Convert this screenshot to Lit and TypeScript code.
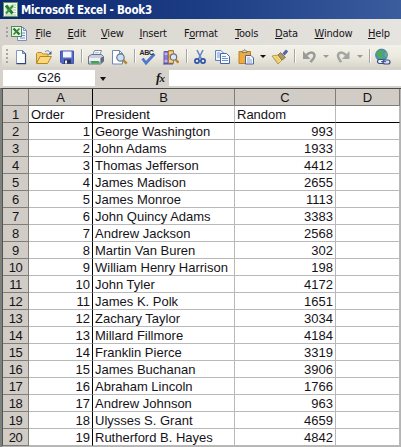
import { LitElement, css, html, svg } from 'lit';
import { customElement } from 'lit/decorators.js';

const MENUS = ['File', 'Edit', 'View', 'Insert', 'Format', 'Tools', 'Data', 'Window', 'Help'];

const PRESIDENTS: [string, number][] = [
	['George Washington', 993],
	['John Adams', 1933],
	['Thomas Jefferson', 4412],
	['James Madison', 2655],
	['James Monroe', 1113],
	['John Quincy Adams', 3383],
	['Andrew Jackson', 2568],
	['Martin Van Buren', 302],
	['William Henry Harrison', 198],
	['John Tyler', 4172],
	['James K. Polk', 1651],
	['Zachary Taylor', 3034],
	['Millard Fillmore', 4184],
	['Franklin Pierce', 3319],
	['James Buchanan', 3906],
	['Abraham Lincoln', 1766],
	['Andrew Johnson', 963],
	['Ulysses S. Grant', 4659],
	['Rutherford B. Hayes', 4842],
];

const ICONS: Record<string, unknown> = {
	new: svg`
		<path d="M3.5 2.5h6l3 3v10h-9z" fill="#fdfeff" stroke="#8299c4" />
		<path d="M12.5 5.5v10.2h-9" fill="none" stroke="#34477c" stroke-width="1.2" />
		<path d="M9.5 2.5v3h3z" fill="#a9bde2" stroke="#52699e" stroke-width=".8" />`,
	open: svg`
		<path d="M1.5 15V5.5l1-1h4l1.5 1.5h5V9" fill="#f3cf70" stroke="#b98a2b" />
		<path d="M1.5 15.5 5 8.5h11.5l-4 7z" fill="#fbd878" stroke="#b58629" />
		<path d="M10 4c2-2 4-1.5 5 .5" fill="none" stroke="#6d7da6" />
		<path d="M16.5 3v3.5h-3.5z" fill="#435a92" />`,
	save: svg`
		<path d="M1.5 3h13v12.5h-11.5l-1.5-1.5z" fill="#5468c6" stroke="#4355aa" />
		<path d="M4 3.5h8.500v6h-8.500z" fill="#f3f5ff" />
		<path d="M5 11.5h7v4h-7z" fill="#29335f" />
		<path d="M6 12.5h2v3h-2z" fill="#f0f2fb" />`,
	print: svg`
		<path d="M5.5 7.5 7.5 2.5h7l-2 5z" fill="#fff" stroke="#7d8cac" />
		<path d="M8 4.5h4M7.5 6h4" stroke="#a3afc8" stroke-width=".7" />
		<path d="M1.5 8.5 4.5 6.5h10l2 2v5l-3 2.500h-12z" fill="#c8cede" stroke="#69738f" />
		<path d="M2 10h11.5v3h-11.5z" fill="#eef0f5" />
		<path d="M3.5 13h8l1.5 2.500h-8.500z" fill="#41a34c" />
		<path d="M13.5 10v5.500l3-2.500v-4.500z" fill="#5c6682" />`,
	preview: svg`
		<path d="M1.5 2.500h7l3 3v10.500h-10z" fill="#fff" stroke="#7287b5" />
		<path d="M8.500 2.500v3h3" fill="none" stroke="#7287b5" />
		<circle cx="9.5" cy="9.5" r="3.7" fill="#cbe2f3" stroke="#667796" stroke-width="1.2" />
		<path d="m12.200 12.200 3.500 3.500" stroke="#b9822f" stroke-width="2.4" />`,
	spelling: svg`
		<path d="m3.500 10.500 3.500 4.500 8.500-9" fill="none" stroke="#4f77cc" stroke-width="2.8" />
		<text x=".5" y="6.500" class="abc">ABC</text>`,
	research: svg`
		<path d="M2 3.500h4v12h-4z" fill="#8f82d2" stroke="#6558ac" />
		<path d="M6.500 2.500h5v13h-5z" fill="#e6b466" stroke="#a87c3b" />
		<path d="M2.500 6h3M2.500 13h3M7 5h4M7 13h4" stroke="#f8edd4" />
		<path d="M1 16h10" stroke="#4d4b9c" />
		<circle cx="11.5" cy="9" r="3.2" fill="#d7e9f3" stroke="#776d72" stroke-width="1.2" />
		<path d="m13.700 11.700 2.800 3" stroke="#bd7e25" stroke-width="2.4" />`,
	cut: svg`
		<path d="M6 2 10.500 11M12 2 7.500 11" stroke="#6787bd" stroke-width="1.6" />
		<circle cx="6" cy="13" r="2.1" fill="none" stroke="#2d55a8" stroke-width="1.7" />
		<circle cx="12" cy="13" r="2.1" fill="none" stroke="#2d55a8" stroke-width="1.7" />`,
	copy: svg`
		<path d="M1.500 2.500h5.500l2.500 2.500v7.500h-8z" fill="#eef4ff" stroke="#6282bb" />
		<path d="M3 5h3M3 7h4M3 9h4" stroke="#6f91cc" stroke-width=".9" />
		<path d="M6.500 5.500h6l3 3v7h-9z" fill="#f6f9ff" stroke="#4566a5" />
		<path d="M8 8.500h4M8 10.500h6M8 12.500h6" stroke="#6185c7" stroke-width=".9" />`,
	paste: svg`
		<path d="M1 3.500h11.500v12h-11.500z" fill="#efac3d" stroke="#b97e29" />
		<path d="M4 4.500v-1.500h1.500l1-1.500 1 1.500h1.500v1.500z" fill="#e4e1d6" stroke="#756b58" stroke-width=".8" />
		<path d="M7.500 7.500h5.500l2.500 2.500v6h-8z" fill="#f4f8ff" stroke="#4a659d" />
		<path d="M9 10h3M9 12h5M9 14h5" stroke="#7a9ad0" stroke-width=".9" />`,
	painter: svg`
		<path d="m1 8 6-1 4 5-4 4z" fill="#f8df82" stroke="#aa8a3a" stroke-width=".8" />
		<path d="M3 9.500 7.500 15M5 8.500l3.500 4.500" stroke="#c7a24c" stroke-width=".7" />
		<path d="m7 7 2.500-2.500 5 5-3.500 2.500z" fill="#b39860" stroke="#7a6948" stroke-width=".8" />
		<path d="m12.500 6.500 3.500-4" stroke="#5764a5" stroke-width="3" />`,
	undo: svg`
		<path d="M6.500 7c4.500-4 8-2.500 8 .7 0 2.800-2.500 4-4 6.500" fill="none" stroke="#9b9a98" stroke-width="2.5" />
		<path d="M3 3v8h7.500z" fill="#9b9a98" />`,
	redo: svg`
		<path d="M12 7c-4.500-4-8-2.500-8 .7 0 2.800 2 4 3 6.500" fill="none" stroke="#a5a4a1" stroke-width="2.5" />
		<path d="M15.500 3v8h-7.500z" fill="#a5a4a1" />`,
	link: svg`
		<circle cx="7.5" cy="7" r="5.9" fill="#4c93c9" stroke="#3e6d9a" stroke-width=".8" />
		<path d="M4 3 8 1.500l1.500 2-2 3 2 2-2 3.500-2-1-1-3-2.500-2z" fill="#52ad4b" />
		<path d="m11 3.500 2 2-.5 4-2-2z" fill="#69b957" />
		<rect x="3.5" y="11.5" width="7" height="4" rx="2" fill="#eef1f8" stroke="#3c4f84" stroke-width="1.2" />
		<rect x="9" y="12" width="7" height="4" rx="2" fill="#dbe1ef" stroke="#3c4f84" stroke-width="1.2" />
		<path d="M7 13.700h5" stroke="#3c4f84" />`,
};

// '|' is a separator, 'v' / 'g' are enabled and greyed dropdown arrows
const TOOLS = [
	'new', 'open', 'save', '|', 'print', 'preview', '|', 'spelling', 'research', '|',
	'cut', 'copy', 'paste', 'v', 'painter', '|', 'undo', 'g', 'redo', 'g', '|', 'link',
];

@customElement('excel-logo')
export class ExcelLogo extends LitElement {
	render() {
		return html`<svg width="15" height="15" viewBox="0 0 15 15">
			<rect x=".5" y=".5" width="14" height="14" fill="#f4faf0" stroke="#5f9561" />
			<path d="M9 3h4M9 5.5h4M9 8h4M9 10.5h4M2 13h11" stroke="#a5c8a3" />
			<path d="M2 3h8.500v9h-8.500z" fill="#d5ecd0" />
			<path d="m3 3.500 6.500 8" stroke="#23792f" stroke-width="2.8" />
			<path d="M10 3.500 3 11.500" stroke="#3a9142" stroke-width="2" />
		</svg>`;
	}

	static styles = css`
		:host,
		svg {
			display: block;
		}
	`;
}

@customElement('excel-toolbar')
export class ExcelToolbar extends LitElement {
	renderTool(name: string) {
		if (name === '|') return html`<i class="separator"></i>`;
		if (name === 'v' || name === 'g') {
			return html`<i class="arrow ${name === 'g' ? 'muted' : ''}"></i>`;
		}
		return html`<svg width="17" height="18" viewBox="0 0 17 18">${ICONS[name]}</svg>`;
	}

	render() {
		return html`<i class="grip"></i>${TOOLS.map((name) => this.renderTool(name))}`;
	}

	static styles = css`
		:host {
			display: grid;
			grid-template-columns: 8px 22px 24px 21px 7px 24px 22px 6px 23px 23px 6px 23px 24px 21px 12px 22px 7px 22px 12px 22px 12px 6px 25px;
			align-items: center;
			box-sizing: border-box;
			height: 22px;
			margin-left: 2px;
			padding-left: 3px;
			border-radius: 3px 0 0 3px;
			background: linear-gradient(#f3f2ea, #ebe9df 55%, #d9d6cb);
		}

		svg {
			display: block;
			margin-top: 2px;
		}

		.abc {
			font: bold 7px 'Liberation Sans', sans-serif;
			letter-spacing: -0.4px;
			fill: #28282c;
		}

		.grip {
			width: 2px;
			height: 14px;
			margin-left: 1px;
			background: repeating-linear-gradient(#aaa79f 0 2px, transparent 2px 4px);
		}

		.separator {
			width: 1px;
			height: 14px;
			margin-left: 1px;
			background: #a6a5a5;
			box-shadow: 1px 0 #fbfaf6;
		}

		.arrow {
			width: 0;
			margin: 1px 0 0 1px;
			border: 3px solid transparent;
			border-top-color: #111;
			border-bottom: 0;
		}

		.muted {
			border-top-color: #9a9996;
		}
	`;
}

@customElement('excel-sheet')
export class ExcelSheet extends LitElement {
	renderRow(num: number, cells: unknown[]) {
		return html`<div class="row ${num === 1 ? 'titles' : ''}">
			<div class="num">${num}</div>
			${cells.map((cell) => html`<div class="cell ${typeof cell === 'number' ? 'right' : ''}">${cell}</div>`)}
			<div class="cell"></div>
		</div>`;
	}

	render() {
		return html`
			<div class="row letters">
				<div></div>
				${['A', 'B', 'C', 'D'].map((letter) => html`<div>${letter}</div>`)}
			</div>
			${this.renderRow(1, ['Order', 'President', 'Random'])}
			${PRESIDENTS.map(([name, random], i) => this.renderRow(i + 2, [i + 1, name, random]))}
		`;
	}

	static styles = css`
		:host {
			display: block;
			box-sizing: border-box;
			height: 359px;
			border-left: 2px solid #7d817b;
			border-top: 1px solid #4b4c4a;
			background: #b5b5b5;
			color: #151318;
			font: 13px/17px 'Liberation Sans', Arial, sans-serif;
		}

		.row {
			display: grid;
			grid-template-columns: 26px 64px 142px 101px 64px;
			height: 17px;
			border-left: 1px solid #555;
		}

		.row > div {
			box-sizing: border-box;
			height: 17px;
			border-right: 1px solid #b9b9b9;
			border-bottom: 1px solid #b9b9b9;
			white-space: nowrap;
		}

		.letters > div,
		.row > .num {
			background: #d1cdc6;
			border-color: #7e7d79;
			text-align: center;
		}

		.row > .num {
			letter-spacing: -0.4px;
		}

		.cell {
			padding: 0 2px;
			background: #fff;
		}

		.right {
			text-align: right;
		}

		.row > div:nth-child(2) {
			border-right-color: #000;
		}

		.titles > .cell {
			border-bottom-color: #000;
		}
	`;
}

@customElement('app-root')
export class AppRoot extends LitElement {
	render() {
		return html`
			<header class="title">
				<excel-logo></excel-logo>
				<span>Microsoft Excel - Book3</span>
			</header>
			<nav class="menu">
				<i class="grip"></i>
				<svg width="17" height="17" viewBox="0 0 17 17">
					<path d="M6.5 2.5h6l3 3v10h-9z" fill="#f2f6fe" stroke="#7a91bd" />
					<path d="M12.5 2.5v3h3M9 8h5M9 10.5h5M9 13h5" fill="none" stroke="#7590c4" />
					<rect x=".5" y="1.5" width="10" height="10" fill="#e7f3e0" stroke="#528954" />
					<path d="m2.500 3.500 6 6" stroke="#23742d" stroke-width="2.3" />
					<path d="m8.500 3.500-6 6" stroke="#378a40" stroke-width="1.7" />
				</svg>
				${MENUS.map((name) =>
					name === 'Format'
						? html`<span>F<u>o</u>rmat</span>`
						: html`<span><u>${name[0]}</u>${name.slice(1)}</span>`,
				)}
			</nav>
			<excel-toolbar></excel-toolbar>
			<div class="formula">
				<div class="name">G26</div>
				<i class="arrow"></i>
				<span class="fx">f<small>x</small></span>
				<div class="value"></div>
			</div>
			<excel-sheet></excel-sheet>
		`;
	}

	static styles = css`
		:host {
			display: flex;
			flex-direction: column;
			width: 401px;
			height: 447px;
			overflow: hidden;
			background: #d6d2cb;
			color: #17151a;
			font-family: 'Liberation Sans', Arial, sans-serif;
		}

		.title {
			display: flex;
			align-items: center;
			gap: 3px;
			height: 19px;
			padding-left: 3px;
			background: linear-gradient(90deg, #0c2871, #1c3c83 50%, #3b5d9e);
			color: #fff;
			font: bold 11.5px/19px 'DejaVu Sans Condensed', 'Noto Sans', sans-serif;
			letter-spacing: -0.25px;
			white-space: nowrap;
		}

		.title span {
			padding-top: 1px;
		}

		.menu {
			display: grid;
			grid-template-columns: 6px 24.5px 32px 33.5px 38.5px 44.5px 51px 40px 39.5px 53.5px 30px;
			align-items: center;
			box-sizing: border-box;
			height: 26px;
			padding: 1px 0 0 5px;
			background: linear-gradient(90deg, #d7d3cc, #e6e4df);
			font: 11px/25px 'DejaVu Sans Condensed', 'Noto Sans', sans-serif;
			letter-spacing: -0.18px;
		}

		.menu span {
			padding-top: 1px;
		}

		.menu u {
			text-underline-offset: 1px;
		}

		.grip {
			width: 2px;
			height: 12px;
			margin-left: 1px;
			background: repeating-linear-gradient(#a3a19c 0 2px, transparent 2px 4px);
		}

		.formula {
			display: grid;
			grid-template-columns: 92px 61px 13px 1fr;
			align-items: center;
			height: 16px;
			padding: 3px 0 2px 3px;
		}

		.name,
		.value {
			height: 16px;
			background: #fff;
			font-size: 12.5px;
			line-height: 17px;
			text-align: center;
		}

		.arrow {
			width: 0;
			margin: 1px 0 0 5px;
			border: 3.5px solid transparent;
			border-top: 4px solid #111;
			border-bottom: 0;
		}

		.fx {
			font: italic bold 13px/16px 'Liberation Serif', serif;
			letter-spacing: -0.8px;
		}

		.fx small {
			font-size: 11px;
		}
	`;
}
